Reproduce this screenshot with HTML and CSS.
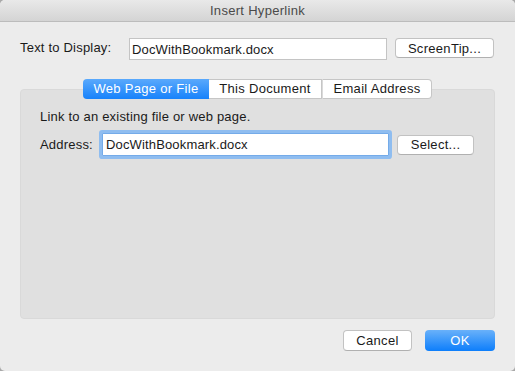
FILE: index.html
```html
<!DOCTYPE html>
<html>
<head>
  <title>Insert Hyperlink</title>
  <meta name="viewport" content="width=device-width, initial-scale=1.0">
  <link rel="stylesheet" href="styles.css">
</head>
<body>
  <div class="window">
    <div class="titlebar">Insert Hyperlink</div>
    <div class="content">
      <div class="display-row">
        <label class="field-label">Text to Display:</label>
        <div class="textbox display-box">DocWithBookmark.docx</div>
        <button class="btn screentip">ScreenTip...</button>
      </div>
      <div class="tabbox">
        <div class="tabs">
          <div class="tab active tab-web">Web Page or File</div>
          <div class="tab tab-doc">This Document</div>
          <div class="tab tab-mail">Email Address</div>
        </div>
        <div class="panel">
          <p class="hint">Link to an existing file or web page.</p>
          <div class="address-row">
            <label class="address-label">Address:</label>
            <div class="textbox address-box">DocWithBookmark.docx</div>
            <button class="btn select">Select...</button>
          </div>
        </div>
      </div>
      <div class="actions">
        <button class="btn cancel">Cancel</button>
        <button class="btn primary">OK</button>
      </div>
    </div>
  </div>
</body>
</html>
```

FILE: styles.css
```css
html, body {
  margin: 0;
  padding: 0;
  background: #a9a9a9;
}
body {
  width: 515px;
  height: 371px;
  overflow: hidden;
  font-family: 'Liberation Sans', Arial, sans-serif;
  font-size: 13px;
  color: #1a1a1a;
}
.window {
  width: 515px;
  height: 371px;
  background: #ececec;
  border-radius: 5px;
  overflow: hidden;
}
.titlebar {
  height: 21px;
  line-height: 21px;
  text-align: center;
  color: #4a4a4a;
  background: linear-gradient(#e9e9e9, #d4d4d4);
  border-bottom: 1px solid #bcbcbc;
  letter-spacing: 0.3px;
}
.content {
  padding: 16px 20px 0 20px;
}
.display-row {
  display: flex;
  align-items: flex-start;
  height: 22px;
}
.field-label {
  width: 109px;
  line-height: 20px;
  letter-spacing: 0.2px;
}
.textbox {
  box-sizing: border-box;
  background: #fff;
  border: 1px solid #c4c4c4;
  padding: 0 0 0 2px;
  letter-spacing: 0.15px;
}
.display-box {
  width: 258px;
  height: 22px;
  line-height: 21px;
}
.btn {
  box-sizing: border-box;
  font-family: 'Liberation Sans', Arial, sans-serif;
  font-size: 13px;
  color: #1a1a1a;
  background: #fff;
  border: 1px solid #c2c2c2;
  border-bottom-color: #b0b0b0;
  border-radius: 4px;
  height: 20px;
  padding: 0;
  letter-spacing: 0.3px;
}
.screentip {
  width: 99px;
  margin-left: 8px;
}
.tabbox {
  margin-top: 19px;
}
.tabs {
  position: relative;
  z-index: 1;
  display: flex;
  justify-content: center;
  margin-bottom: -10px;
}
.tab {
  box-sizing: border-box;
  height: 20px;
  line-height: 18px;
  text-align: center;
  background: #fff;
  border: 1px solid #c6c6c6;
  border-left: 1px solid #dadada;
  letter-spacing: 0.3px;
}
.tab-web { width: 126px; }
.tab-doc { width: 113px; border-left: none; }
.tab-mail {
  width: 110px;
  border-radius: 0 4px 4px 0;
}
.tab.active {
  color: #fff;
  border: none;
  line-height: 20px;
  border-radius: 4px 0 0 4px;
  background: linear-gradient(#5aa9fc, #1782fb);
}
.panel {
  box-sizing: border-box;
  height: 230px;
  background: #e0e0e0;
  border: 1px solid #d9d9d9;
  border-radius: 4px;
  padding: 19px 19px 0 19px;
}
.hint {
  margin: 0;
  line-height: 16px;
  letter-spacing: 0.2px;
}
.address-row {
  display: flex;
  align-items: center;
  margin-top: 8px;
}
.address-label {
  width: 62px;
  letter-spacing: 0.2px;
}
.address-box {
  width: 287px;
  height: 23px;
  line-height: 21px;
  border: 1px solid #74abe9;
  box-shadow: 0 0 0 3px #8fbdf0;
  border-radius: 1px;
  padding-left: 3px;
}
.select {
  width: 77px;
  margin-left: 8px;
}
.actions {
  display: flex;
  justify-content: flex-end;
  gap: 13px;
  margin-top: 11px;
}
.cancel {
  width: 69px;
  height: 21px;
}
.primary {
  width: 70px;
  height: 21px;
  color: #fff;
  border: none;
  background: linear-gradient(#69b1fa, #0d7efb);
}
```
